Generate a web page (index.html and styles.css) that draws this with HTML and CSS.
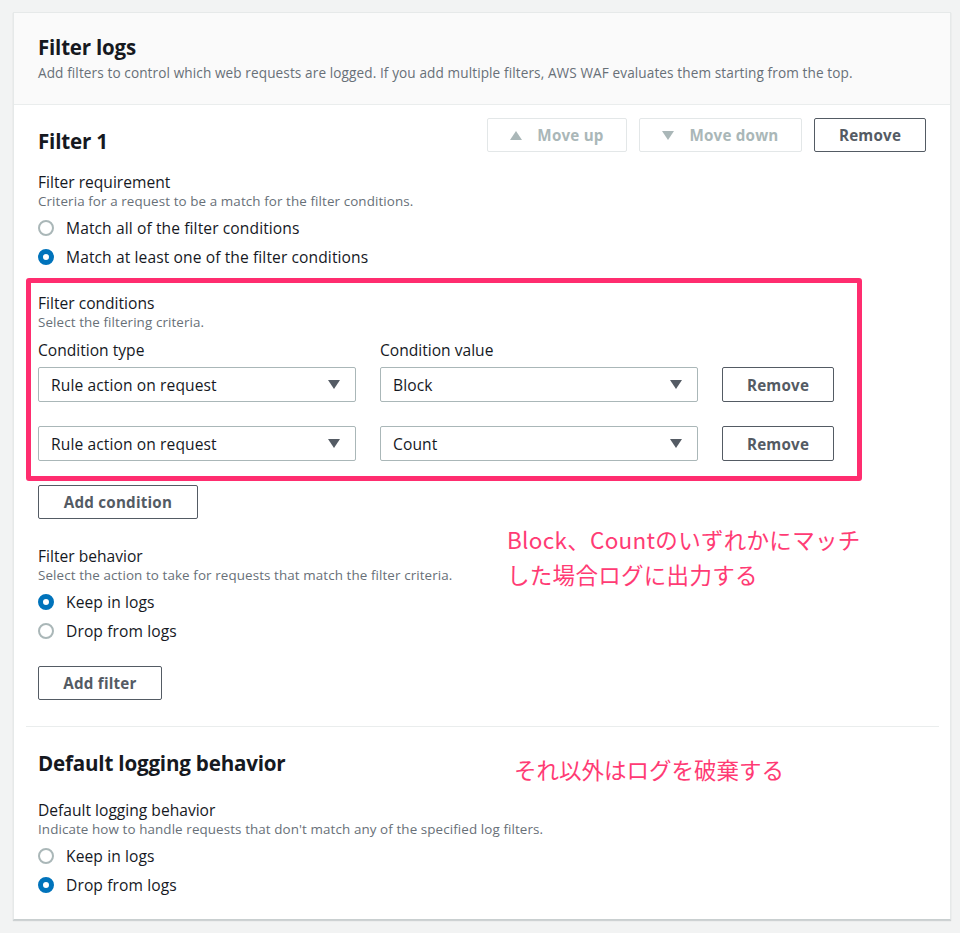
FILE: index.html
```html
<!DOCTYPE html>
<html lang="en">
<head>
<meta charset="utf-8">
<link rel="stylesheet" href="styles.css">
</head>
<body>
<div class="card">
  <div class="card-header">
    <h2 class="card-title">Filter logs</h2>
    <p class="card-desc">Add filters to control which web requests are logged. If you add multiple filters, AWS WAF evaluates them starting from the top.</p>
  </div>
  <div class="card-body">
    <div class="filter-head">
      <h3 class="filter-title">Filter 1</h3>
      <div class="head-actions">
        <button class="btn btn-disabled btn-up"><svg class="tri" viewBox="0 0 12 9"><path d="M6 0 L12 9 L0 9 Z"/></svg>Move up</button>
        <button class="btn btn-disabled btn-down"><svg class="tri" viewBox="0 0 12 9"><path d="M0 0 L12 0 L6 9 Z"/></svg>Move down</button>
        <button class="btn btn-remove-top">Remove</button>
      </div>
    </div>

    <div class="field field-req">
      <div class="label">Filter requirement</div>
      <div class="desc">Criteria for a request to be a match for the filter conditions.</div>
      <div class="radios">
        <div class="radio-row"><span class="radio"></span>Match all of the filter conditions</div>
        <div class="radio-row"><span class="radio checked"></span>Match at least one of the filter conditions</div>
      </div>
    </div>

    <div class="conditions">
      <div class="label">Filter conditions</div>
      <div class="desc">Select the filtering criteria.</div>
      <div class="cond-grid">
        <div class="label">Condition type</div>
        <div class="label">Condition value</div>
        <div></div>
        <div class="select">Rule action on request<svg class="caret" viewBox="0 0 12 9"><path d="M0 0 L12 0 L6 9 Z"/></svg></div>
        <div class="select">Block<svg class="caret" viewBox="0 0 12 9"><path d="M0 0 L12 0 L6 9 Z"/></svg></div>
        <button class="btn btn-remove">Remove</button>
        <div class="select">Rule action on request<svg class="caret" viewBox="0 0 12 9"><path d="M0 0 L12 0 L6 9 Z"/></svg></div>
        <div class="select">Count<svg class="caret" viewBox="0 0 12 9"><path d="M0 0 L12 0 L6 9 Z"/></svg></div>
        <button class="btn btn-remove">Remove</button>
      </div>
    </div>

    <button class="btn btn-add-cond">Add condition</button>

    <div class="field field-behavior">
      <div class="label">Filter behavior</div>
      <div class="desc">Select the action to take for requests that match the filter criteria.</div>
      <div class="radios">
        <div class="radio-row"><span class="radio checked"></span>Keep in logs</div>
        <div class="radio-row"><span class="radio"></span>Drop from logs</div>
      </div>
    </div>

    <button class="btn btn-add-filter">Add filter</button>

    <hr class="divider">

    <h3 class="section-title">Default logging behavior</h3>

    <div class="field field-default">
      <div class="label">Default logging behavior</div>
      <div class="desc">Indicate how to handle requests that don't match any of the specified log filters.</div>
      <div class="radios">
        <div class="radio-row"><span class="radio"></span>Keep in logs</div>
        <div class="radio-row"><span class="radio checked"></span>Drop from logs</div>
      </div>
    </div>
  </div>

  <div class="note note-1">Block、Countのいずれかにマッチ<br>した場合ログに出力する</div>
  <div class="note note-2">それ以外はログを破棄する</div>
</div>
</body>
</html>
```

FILE: styles.css
```css
* { box-sizing: border-box; }

html, body {
  margin: 0;
  background: #f2f3f3;
}

body {
  padding: 12px 9px 13px 13px;
  font-family: "Open Sans", "Noto Sans", "Noto Sans CJK JP", sans-serif;
  color: #16191f;
  font-size: 15.6px;
}

.card {
  position: relative;
  width: 938px;
  height: 908px;
  background: #fff;
  border: 1px solid #e6e9e9;
  border-bottom-color: #c9cfd0;
  box-shadow: 0 1px 1px rgba(0, 28, 36, 0.15);
}

.card-header {
  background: #fafafa;
  border-bottom: 1px solid #eaeded;
  padding: 22px 24px 22px 24px;
  height: 92px;
}

.card-title {
  margin: 0;
  font-size: 20.5px;
  line-height: 24px;
  font-weight: 700;
  letter-spacing: -0.2px;
}

.card-desc {
  margin: 5px 0 0;
  font-size: 13.6px;
  line-height: 18px;
  color: #687078;
  letter-spacing: 0.1px;
}

.card-body {
  padding: 0 24px;
}

.filter-head {
  display: flex;
  justify-content: space-between;
  align-items: flex-start;
  margin-top: 13px;
}

.filter-title {
  margin: 0;
  padding-top: 11px;
  font-size: 20.6px;
  line-height: 24px;
  font-weight: 700;
  letter-spacing: -0.2px;
}

.head-actions {
  display: flex;
  gap: 12px;
}

.btn {
  display: inline-flex;
  align-items: center;
  justify-content: center;
  height: 34px;
  padding: 0;
  background: #fff;
  border: 1px solid #545b64;
  border-radius: 2px;
  font-family: "Open Sans", "Noto Sans", sans-serif;
  font-size: 15.2px;
  font-weight: 700;
  color: #545b64;
  letter-spacing: 0.2px;
}

.btn-disabled {
  border-color: #e3e7e8;
  color: #aab7b8;
}

.btn-up { width: 140px; }
.btn-down { width: 163px; }
.btn-remove-top { width: 112px; }

.tri {
  width: 12px;
  height: 9px;
  fill: #aab7b8;
  margin-right: 15px;
}

.label {
  font-size: 15.6px;
  line-height: 22px;
  color: #16191f;
}

.desc {
  font-size: 13.4px;
  line-height: 16px;
  color: #687078;
  letter-spacing: 0.1px;
}

.field-req { margin-top: 18px; }

.radios {
  margin-top: 4px;
}

.radio-row {
  display: flex;
  align-items: center;
  height: 29px;
  font-size: 15.6px;
  color: #16191f;
  letter-spacing: 0.1px;
}

.radio {
  width: 16px;
  height: 16px;
  border-radius: 50%;
  border: 2px solid #aab7b8;
  margin-right: 12px;
  flex: none;
}

.radio.checked {
  border: 5px solid #0073bb;
  background: #fff;
}

.conditions {
  width: 836px;
  margin: 7px 0 0 -12px;
  border: 5px solid #ff2d6f;
  border-radius: 3px;
  padding: 9px 20px 15px 7px;
}

.cond-grid {
  display: grid;
  grid-template-columns: 318px 318px 112px;
  column-gap: 24px;
  row-gap: 24px;
  margin-top: 9px;
}

.cond-grid > .label {
  margin-bottom: -18px;
}

.select {
  position: relative;
  height: 35px;
  border: 1px solid #aab7b8;
  border-radius: 2px;
  padding: 0 40px 0 12px;
  display: flex;
  align-items: center;
  font-size: 15.6px;
  color: #16191f;
  letter-spacing: 0.1px;
}

.caret {
  position: absolute;
  right: 15px;
  top: 12px;
  width: 12px;
  height: 9px;
  fill: #545b64;
}

.btn-remove {
  height: 35px;
  width: 112px;
}

.btn-add-cond {
  margin-top: 4px;
  width: 160px;
}

.field-behavior { margin-top: 26px; }

.btn-add-filter {
  margin-top: 21px;
  width: 124px;
}

.divider {
  border: 0;
  border-top: 1px solid #eaeded;
  margin: 26px -13px 0 -12px;
}

.section-title {
  margin: 24px 0 0;
  font-size: 20.6px;
  line-height: 24px;
  font-weight: 700;
  letter-spacing: -0.2px;
}

.field-default { margin-top: 24px; }

.note {
  position: absolute;
  font-family: "Noto Sans CJK JP", "Noto Sans", sans-serif;
  color: #ff3b74;
  font-size: 22.5px;
  line-height: 35px;
}

.note-1 { left: 493px; top: 509px; letter-spacing: 0.3px; }
.note-2 { left: 500px; top: 739px; }
```
